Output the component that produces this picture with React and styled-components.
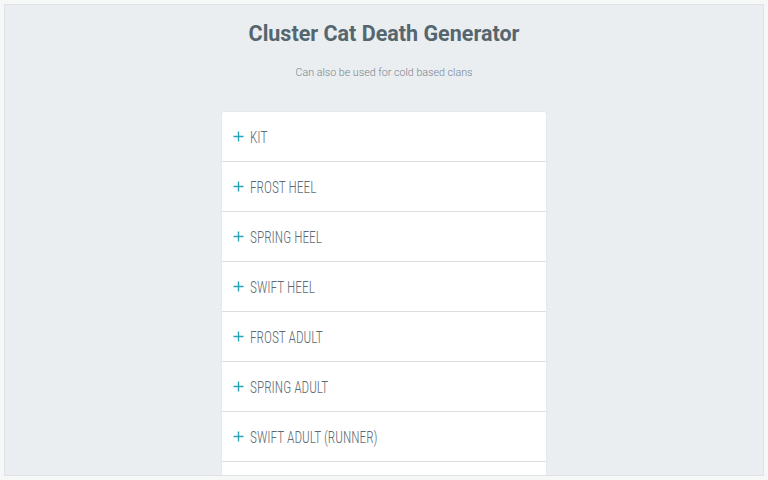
import styled, { createGlobalStyle } from "styled-components"

const GlobalStyle = createGlobalStyle`
    html, body {
        margin: 0;
        padding: 0;
        background: #f6f7f7;
    }
    body {
        font-family: Roboto, "Liberation Sans", sans-serif;
    }
`

const categories = [
    "KIT",
    "FROST HEEL",
    "SPRING HEEL",
    "SWIFT HEEL",
    "FROST ADULT",
    "SPRING ADULT",
    "SWIFT ADULT (RUNNER)",
]

function Plus() {
    return (
        <svg width="11" height="11" viewBox="0 0 11 11">
            <path d="M5.5 0.5v10M0.5 5.5h10" stroke="#27a5b7" strokeWidth="1.4" fill="none" />
        </svg>
    )
}

export default function App() {
    return (
        <Page>
            <GlobalStyle />
            <Panel>
                <Title>Cluster Cat Death Generator</Title>
                <Subtitle>Can also be used for cold based clans</Subtitle>
                <Card>
                    {categories.map((name) => (
                        <Row key={name}>
                            <Plus />
                            <Label>{name}</Label>
                        </Row>
                    ))}
                    {/* next row continues below the fold */}
                    <Row />
                </Card>
            </Panel>
        </Page>
    )
}

const Page = styled.div`
    padding: 4px 4px 0 4px;
    height: 480px;
    box-sizing: border-box;
`

const Panel = styled.div`
    height: 472px;
    box-sizing: border-box;
    background: #eaeef1;
    border: 1px solid #e0e3e5;
    overflow: hidden;
    display: flex;
    flex-direction: column;
    align-items: center;
`

const Title = styled.h1`
    margin: 16px 0 0 0;
    font-size: 21.5px;
    line-height: 26px;
    font-weight: 700;
    color: #55666f;
`

const Subtitle = styled.p`
    margin: 19px 0 0 0;
    font-size: 10.7px;
    line-height: 14px;
    font-weight: 300;
    color: #76838c;
`

const Card = styled.div`
    margin-top: 31px;
    width: 324px;
    background: #ffffff;
    border-radius: 3px;
    border: 1px solid #e6e8ea;
    border-bottom: none;
`

const Row = styled.div`
    height: 49px;
    display: flex;
    align-items: center;
    gap: 6px;
    padding-left: 11px;
    border-bottom: 1px solid #dcdfe1;
`

const Label = styled.span`
    display: inline-block;
    font-family: "Roboto Condensed", "DejaVu Sans Condensed", sans-serif;
    font-size: 17px;
    font-weight: 300;
    color: #5d6a73;
    transform: scaleX(0.79);
    transform-origin: left center;
`
